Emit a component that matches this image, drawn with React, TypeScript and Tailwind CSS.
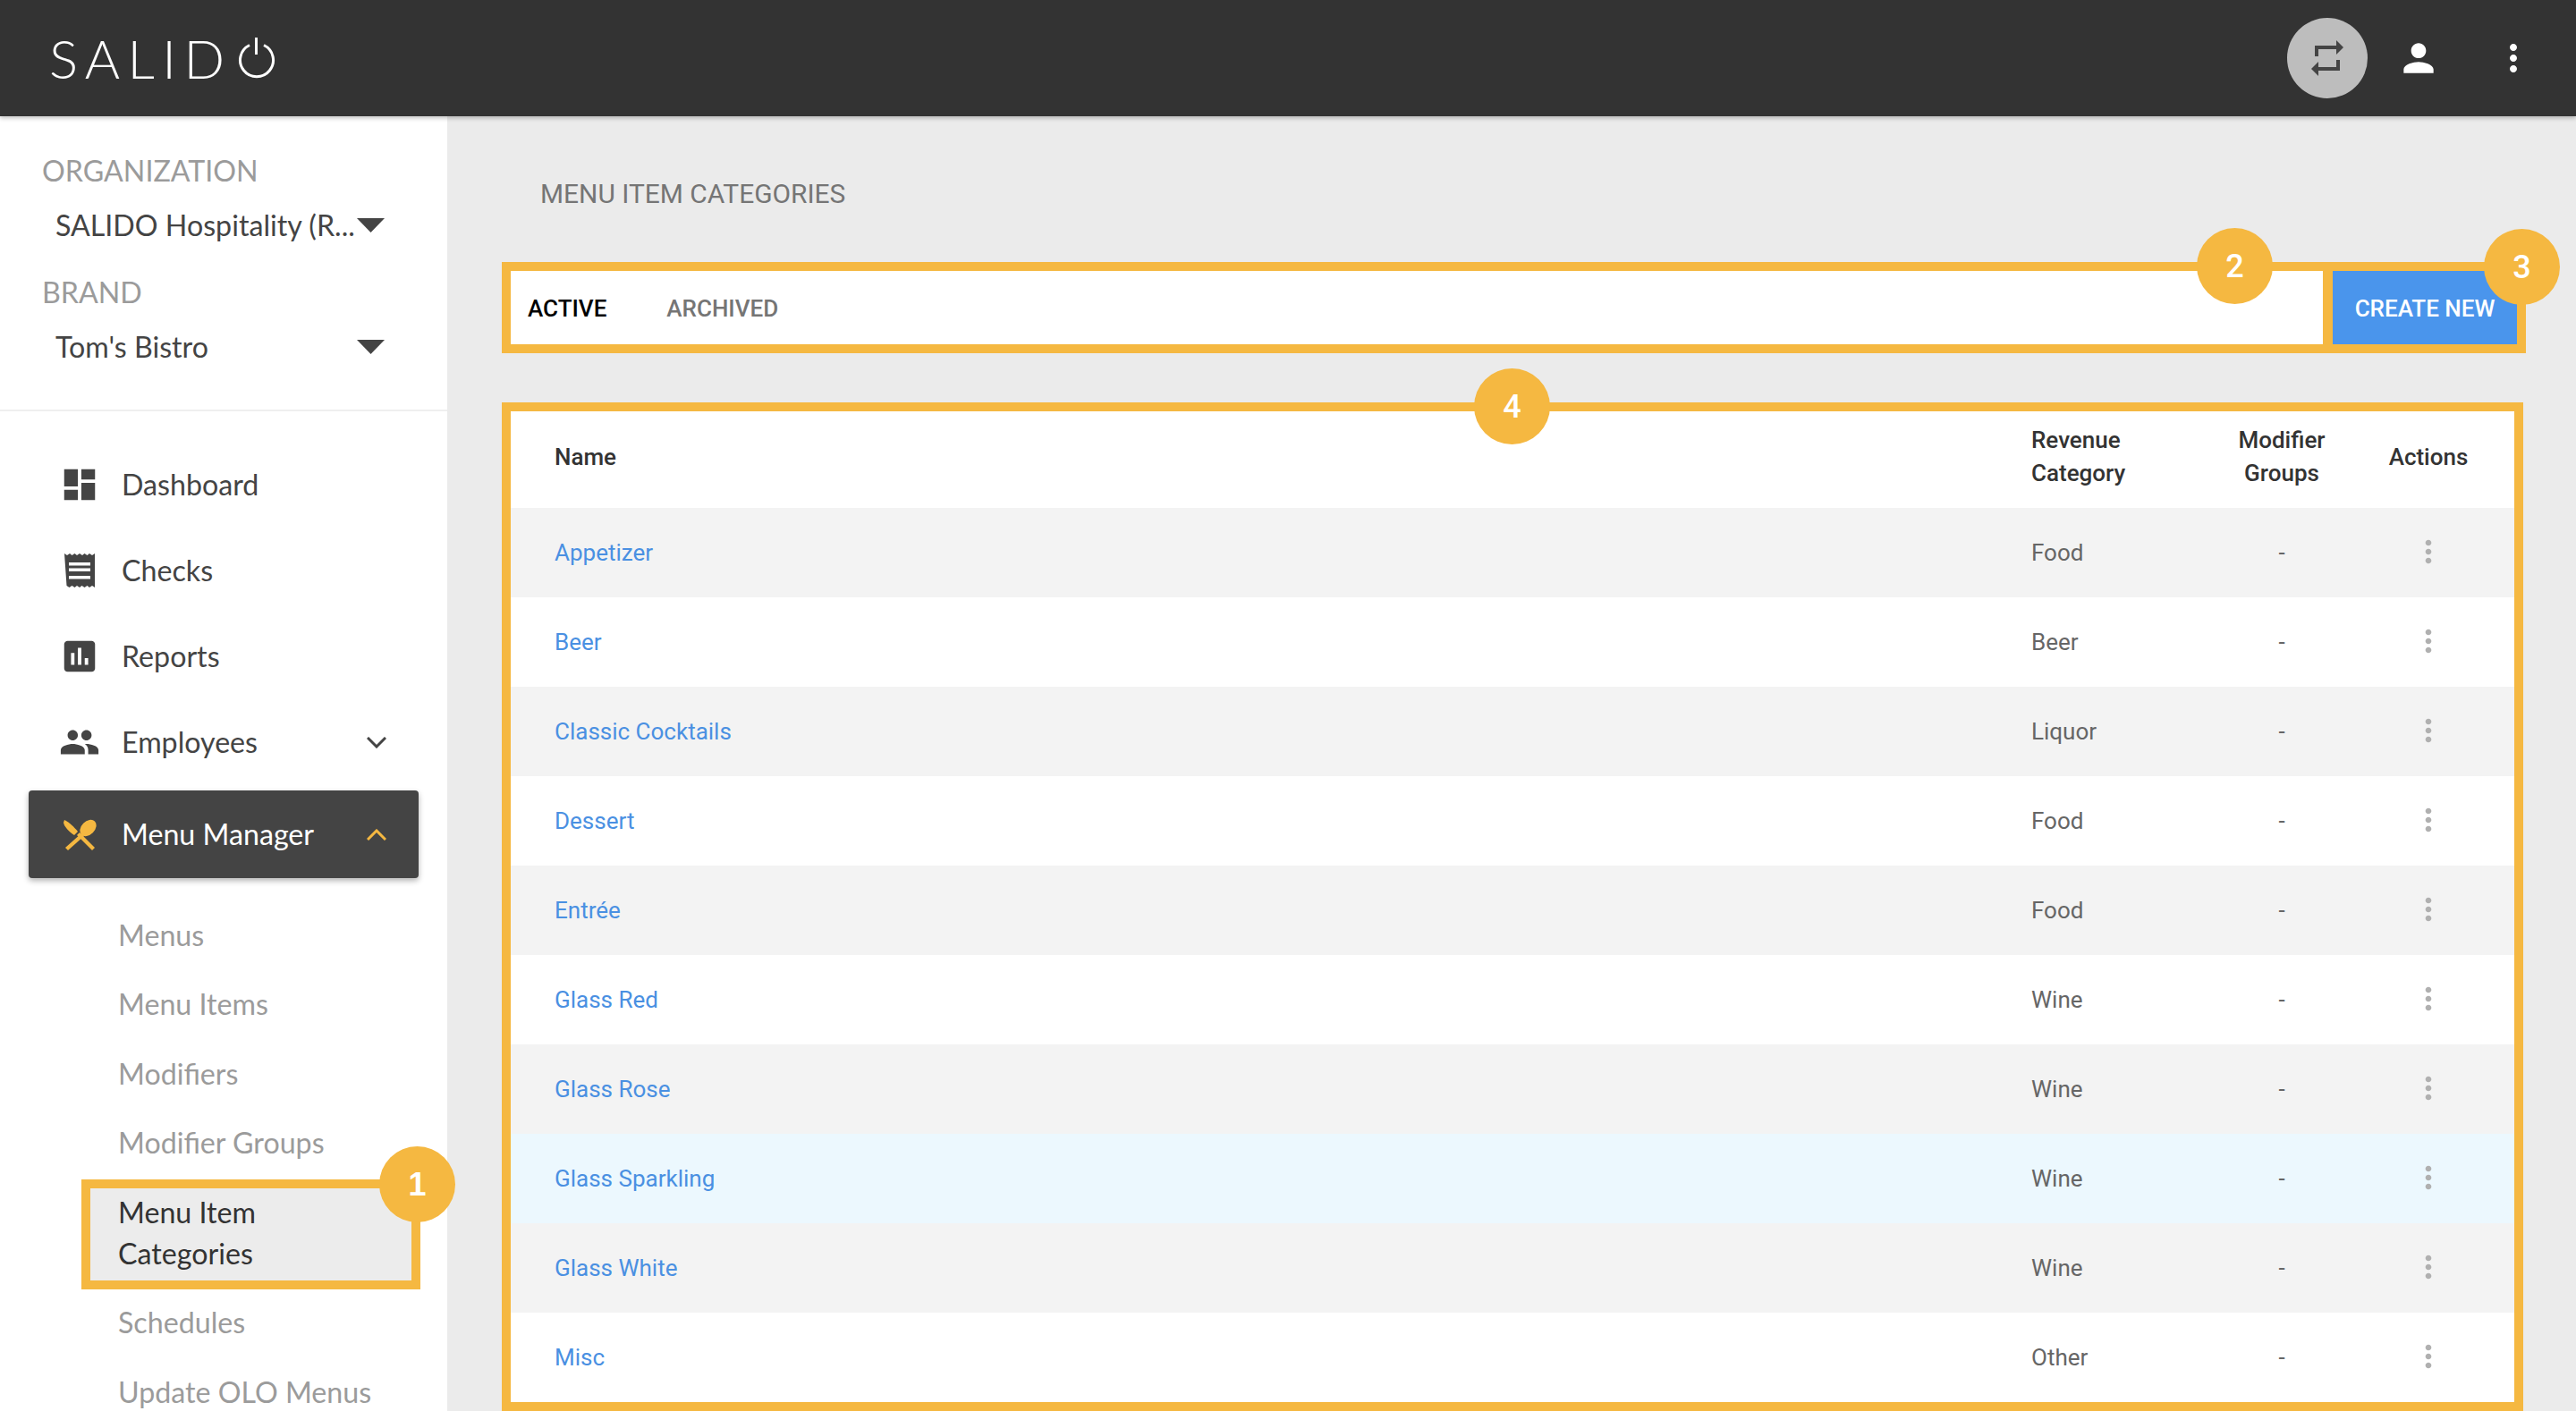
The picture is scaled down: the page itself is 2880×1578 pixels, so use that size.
import React from 'react';

const rows = [
  { name: 'Appetizer', category: 'Food' },
  { name: 'Beer', category: 'Beer' },
  { name: 'Classic Cocktails', category: 'Liquor' },
  { name: 'Dessert', category: 'Food' },
  { name: 'Entrée', category: 'Food' },
  { name: 'Glass Red', category: 'Wine' },
  { name: 'Glass Rose', category: 'Wine' },
  { name: 'Glass Sparkling', category: 'Wine' },
  { name: 'Glass White', category: 'Wine' },
  { name: 'Misc', category: 'Other' },
];

const subItems = ['Menus', 'Menu Items', 'Modifiers', 'Modifier Groups'];

function MaterialIcon({ d, className }: { d: string; className: string }) {
  return (
    <svg viewBox="0 0 24 24" fill="currentColor" className={className}>
      <path d={d} />
    </svg>
  );
}

function Caret() {
  return (
    <svg viewBox="0 0 31 16" className="w-[31px] h-[16px] shrink-0 fill-[#444]">
      <path d="M0 0h31L15.5 16z" />
    </svg>
  );
}

function ChecksIcon() {
  return (
    <svg viewBox="0 0 34 38" className="w-[34px] h-[38px]">
      <path
        fill="#444"
        fillRule="evenodd"
        d="M0 0l3 2 3-2 2.500 2 3-2 2.500 2 3-2 3 2 2.500-2 3 2 2.500-2 3 2 3-2v38l-3-2-3 2-2.500-2-3 2-3-2-2.500 2-3-2-2.500 2-3-2-3 2-3-2zM5 10v3.500h24V10zM5 16.500V20h24v-3.500zM5 25v3.500h24V25z"
      />
    </svg>
  );
}

function CutleryIcon() {
  return (
    <svg viewBox="0 0 38 35" className="w-[38px] h-[35px]" fill="#f5b841">
      <path d="M1 1c5 2 11 8 15 13l-4 4C7 15 1 9 0 4z" />
      <ellipse cx="27.500" cy="10" rx="10.500" ry="7.500" transform="rotate(-45 27.500 10)" />
      <path d="M20 16l3 3L5 35l-3-3z" />
      <path d="M15 18l3-3 17 17-3 3z" />
    </svg>
  );
}

function Badge({ n, className }: { n: string; className: string }) {
  return (
    <div
      className={`absolute z-10 flex h-[85px] w-[85px] items-center justify-center rounded-full bg-[#f5b841] text-[36px] text-white ${className}`}
    >
      {n}
    </div>
  );
}

function NavRow({ icon, children }: { icon: React.ReactNode; children: React.ReactNode }) {
  return (
    <div className="flex h-[96px] items-center pr-[68px]">
      <div className="flex w-[136px] shrink-0 pl-[66px]">
        <div className="flex w-[46px] justify-center">{icon}</div>
      </div>
      {children}
    </div>
  );
}

function Sidebar() {
  return (
    <aside className="w-[500px] shrink-0 bg-white font-['Lato',sans-serif] text-[32.2px]">
      <div className="h-[330px] border-b-2 border-[#efefef] pl-[47px] pr-[70px] pt-[41px]">
        <div className="h-[40px] leading-[40px] text-[#9b9b9b]">ORGANIZATION</div>
        <div className="mt-[16px] flex h-[50px] items-center justify-between whitespace-nowrap pl-[15px] text-[#444]">
          <span>SALIDO Hospitality (R...</span>
          <Caret />
        </div>
        <div className="mt-[30px] h-[40px] leading-[40px] text-[#9b9b9b]">BRAND</div>
        <div className="mt-[16px] flex h-[50px] items-center justify-between pl-[15px] text-[#444]">
          <span>Tom's Bistro</span>
          <Caret />
        </div>
      </div>

      <nav className="pt-[34px] text-[#444]">
        <NavRow
          icon={
            <MaterialIcon
              className="h-[46px] w-[46px] shrink-0"
              d="M3 13h8V3H3v10zm0 8h8v-6H3v6zm10 0h8V11h-8v10zm0-18v6h8V3h-8z"
            />
          }
        >
          Dashboard
        </NavRow>
        <NavRow icon={<ChecksIcon />}>Checks</NavRow>
        <NavRow
          icon={
            <MaterialIcon
              className="h-[46px] w-[46px] shrink-0"
              d="M19 3H5c-1.100 0-2 .9-2 2v14c0 1.100.9 2 2 2h14c1.100 0 2-.9 2-2V5c0-1.100-.9-2-2-2zM9 17H7v-7h2v7zm4 0h-2V7h2v10zm4 0h-2v-4h2v4z"
            />
          }
        >
          Reports
        </NavRow>
        <NavRow
          icon={
            <MaterialIcon
              className="h-[46px] w-[46px] shrink-0"
              d="M16 11c1.660 0 2.990-1.340 2.990-3S17.660 5 16 5c-1.660 0-3 1.340-3 3s1.340 3 3 3zm-8 0c1.660 0 2.990-1.340 2.990-3S9.660 5 8 5C6.340 5 5 6.340 5 8s1.340 3 3 3zm0 2c-2.330 0-7 1.170-7 3.500V19h14v-2.500c0-2.330-4.670-3.500-7-3.500zm8 0c-.29 0-.62.02-.97.05 1.160.84 1.970 1.970 1.970 3.450V19h6v-2.500c0-2.330-4.670-3.500-7-3.500z"
            />
          }
        >
          <span className="flex-1">Employees</span>
          <svg viewBox="0 0 22 13" className="h-[13px] w-[22px]" fill="none" stroke="#444" strokeWidth="3">
            <path d="M1 1l10 10L21 1" />
          </svg>
        </NavRow>

        <div className="mx-[32px] mt-[6px] flex h-[98px] items-center rounded-[4px] bg-[#444] pr-[36px] text-white shadow-[0_3px_6px_rgba(0,0,0,0.3)]">
          <div className="flex w-[104px] shrink-0 pl-[39px]">
            <CutleryIcon />
          </div>
          <span className="flex-1">Menu Manager</span>
          <svg viewBox="0 0 22 13" className="h-[13px] w-[22px]" fill="none" stroke="#f5b841" strokeWidth="3">
            <path d="M1 12L11 2l10 10" />
          </svg>
        </div>

        <div className="mt-[25px] text-[#9b9b9b]">
          {subItems.map((item) => (
            <div key={item} className="flex h-[77.5px] items-center pl-[132px]">
              {item}
            </div>
          ))}
          <div className="relative mb-[-1.5px] ml-[91px] mt-[2px] flex h-[123px] w-[379px] items-center border-10 border-[#f5b841] bg-[#ececec] pb-[3px] pl-[31px] leading-[46px] text-[#333]">
            <span>
              Menu Item
              <br />
              Categories
            </span>
            <Badge n="1" className="left-[323px] top-[-47px] font-['Liberation_Sans',sans-serif] font-bold" />
          </div>
          <div className="flex h-[77.5px] items-center pl-[132px]">Schedules</div>
          <div className="flex h-[77.5px] items-center pl-[132px]">Update OLO Menus</div>
        </div>
      </nav>
    </aside>
  );
}

function Header() {
  return (
    <header className="relative z-20 flex h-[130px] items-center justify-between bg-[#333] pl-[55px] text-white shadow-[0_2px_5px_rgba(0,0,0,0.25)]">
      <div className="flex items-center">
        <span className="font-['Lato',sans-serif] text-[60px] font-light leading-none tracking-[0.14em]">SALID</span>
        <svg viewBox="0 0 42 46" className="ml-[7px] h-[46px] w-[42px]" fill="none" stroke="#fff" strokeWidth="3">
          <path d="M13 8.500a18.500 18.500 0 1 0 16 0" />
          <path d="M20.500 0v19" />
        </svg>
      </div>
      <div className="flex items-center">
        <div className="flex h-[90px] w-[90px] items-center justify-center rounded-full bg-[#bdbdbd] text-[#444]">
          <MaterialIcon
            className="h-[48px] w-[48px]"
            d="M7 7h10v3l4-4-4-4v3H5v6h2V7zm10 10H7v-3l-4 4 4 4v-3h12v-6h-2v4z"
          />
        </div>
        <MaterialIcon
          className="ml-[32px] h-[50px] w-[50px]"
          d="M12 12c2.210 0 4-1.790 4-4s-1.790-4-4-4-4 1.790-4 4 1.790 4 4 4zm0 2c-2.670 0-8 1.340-8 4v2h16v-2c0-2.660-5.330-4-8-4z"
        />
        <MaterialIcon
          className="ml-[57px] mr-[46px] h-[48px] w-[48px]"
          d="M12 8c1.100 0 2-.9 2-2s-.9-2-2-2-2 .9-2 2 .9 2 2 2zm0 2c-1.100 0-2 .9-2 2s.9 2 2 2 2-.9 2-2-.9-2-2-2zm0 6c-1.100 0-2 .9-2 2s.9 2 2 2 2-.9 2-2-.9-2-2-2z"
        />
      </div>
    </header>
  );
}

function MenuCategoryTable() {
  return (
    <div className="relative mt-[55px] w-[2260px] border-10 border-[#f5b841] bg-white text-[26px]">
      <Badge n="4" className="left-[1077px] top-[-48px] font-medium" />
      <div className="flex h-[108px] items-center pb-[6px] font-medium leading-[37px] text-[#333]">
        <div className="flex-1 pl-[49px]">Name</div>
        <div className="w-[200px]">
          Revenue
          <br />
          Category
        </div>
        <div className="w-[160px] text-center">
          Modifier
          <br />
          Groups
        </div>
        <div className="mr-[12px] w-[168px] text-center">Actions</div>
      </div>
      {rows.map((row, i) => (
        <div
          key={row.name}
          className={`flex h-[100px] items-center text-[#666] ${
            row.name === 'Glass Sparkling' ? 'bg-[#ecf8fe]' : i % 2 === 0 ? 'bg-[#f3f3f3]' : 'bg-white'
          }`}
        >
          <div className="flex-1 pl-[49px] text-[#4a90e2]">{row.name}</div>
          <div className="w-[200px]">{row.category}</div>
          <div className="w-[160px] text-center">-</div>
          <div className="mr-[12px] flex w-[168px] justify-center pb-[2px] text-[#b0b0b0]">
            <MaterialIcon
              className="h-[40px] w-[40px]"
              d="M12 8c1.100 0 2-.9 2-2s-.9-2-2-2-2 .9-2 2 .9 2 2 2zm0 2c-1.100 0-2 .9-2 2s.9 2 2 2 2-.9 2-2-.9-2-2-2zm0 6c-1.100 0-2 .9-2 2s.9 2 2 2 2-.9 2-2-.9-2-2-2z"
            />
          </div>
        </div>
      ))}
    </div>
  );
}

export default function App() {
  return (
    <div className="flex h-[1578px] w-[2880px] flex-col overflow-hidden bg-[#ebebeb] font-['Roboto',sans-serif]">
      <Header />
      <div className="flex flex-1 overflow-hidden">
        <Sidebar />
        <main className="flex-1 pl-[61px] pt-[65px]">
          <h1 className="pl-[43px] text-[29.9px] leading-[44px] text-[#757575]">MENU ITEM CATEGORIES</h1>

          <div className="relative mt-[54px] flex h-[102px] w-[2263px] border-10 border-[#f5b841] text-[26px] font-medium">
            <div className="flex flex-1 items-center bg-white pl-[19px] pt-[2px]">
              <span className="text-black">ACTIVE</span>
              <span className="ml-[67px] text-[#757575]">ARCHIVED</span>
            </div>
            <div className="flex w-[217px] items-center justify-center border-l-[11px] border-[#f5b841] bg-[#4a95ec] pt-[2px] text-white">
              CREATE NEW
            </div>
            <Badge n="2" className="left-[1885px] top-[-48px] font-medium" />
            <Badge n="3" className="left-[2206px] top-[-47px] font-medium" />
          </div>

          <MenuCategoryTable />
        </main>
      </div>
    </div>
  );
}
